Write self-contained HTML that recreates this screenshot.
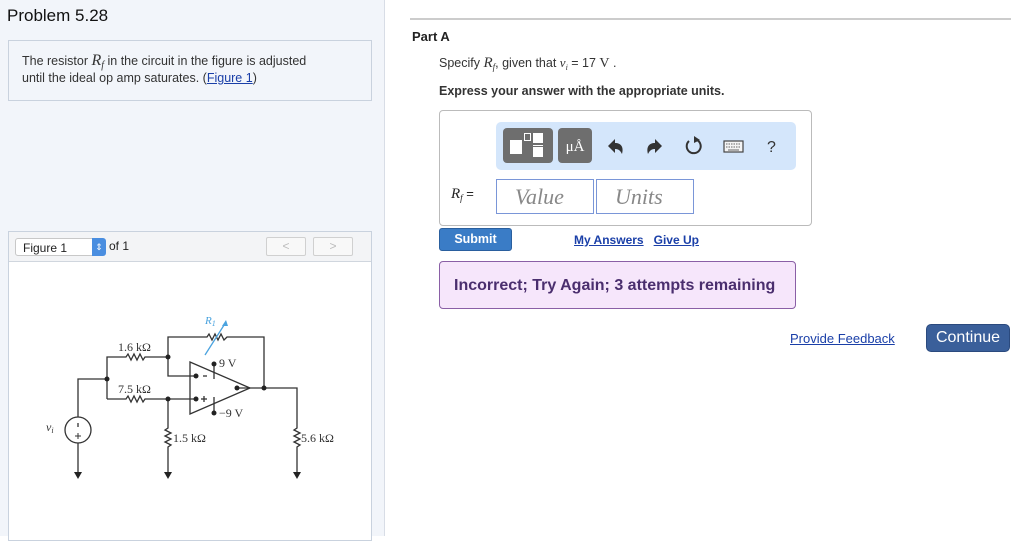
<!DOCTYPE html>
<html><head><meta charset="utf-8"><style>
*{margin:0;padding:0;box-sizing:border-box}
body{width:1024px;height:536px;overflow:hidden;background:#fff;font-family:"Liberation Sans",sans-serif;position:relative;color:#222}
.abs{position:absolute}
#left{left:0;top:0;width:385px;height:536px;background:#f2f5fa;border-right:1px solid #d8dde6}
a{color:#1a3fa8;text-decoration:underline}
.serif{font-family:"Liberation Serif",serif;font-style:italic}
sub{line-height:0;vertical-align:-3px}
</style></head><body>
<div id="left" class="abs">
  <div class="abs" style="left:7px;top:6px;font-size:17px;color:#111">Problem 5.28</div>
  <div class="abs" style="left:8px;top:40px;width:364px;height:61px;border:1px solid #c9d2de;background:#f2f5fa;padding:12px 0 0 13px;font-size:12.5px;line-height:17px;color:#333">The resistor <span class="serif" style="font-size:16px;line-height:0">R<sub style="font-size:10px">f</sub></span> in the circuit in the figure is adjusted<br>until the ideal op amp saturates. (<a>Figure 1</a>)</div>
  <div class="abs" style="left:8px;top:231px;width:364px;height:310px;border:1px solid #c9d2de;background:#fff">
    <div style="height:30px;background:#f3f4f6;border-bottom:1px solid #d0d6de;position:relative">
      <div class="abs" style="left:6px;top:6px;width:90px;height:18px;border:1px solid #c8c8c8;border-radius:3px;background:#fff;font-size:12px;padding:2px 0 0 7px">Figure 1</div>
      <div class="abs" style="left:83px;top:6px;width:14px;height:18px;background:#4a8ee0;border-radius:0 3px 3px 0;color:#fff;font-size:9px;text-align:center;line-height:18px">⇕</div>
      <div class="abs" style="left:100px;top:7px;font-size:12px">of 1</div>
      <div class="abs" style="left:257px;top:5px;width:40px;height:19px;border:1px solid #d0d0d0;border-radius:2px;background:#f8f8f8;color:#bbb;font-size:12px;text-align:center;line-height:17px">&lt;</div>
      <div class="abs" style="left:304px;top:5px;width:40px;height:19px;border:1px solid #d0d0d0;border-radius:2px;background:#f8f8f8;color:#bbb;font-size:12px;text-align:center;line-height:17px">&gt;</div>
    </div>
  </div>
  <svg class="abs" style="left:0;top:0" width="385" height="536" viewBox="0 0 385 536">
   <g stroke="#333" stroke-width="1.3" fill="none">
    <circle cx="78" cy="430" r="13"/>
    <polyline points="78,417 78,379 107,379"/>
    <polyline points="107,399 107,357 126,357 128,354 131,360 134,354 137,360 140,354 143,360 145,357 168,357"/>
    <polyline points="107,399 126,399 128,396 131,402 134,396 137,402 140,396 143,402 145,399 196,399"/>
    <polyline points="168,357 168,337 207,337 209,334 212,340 215,334 218,340 221,334 224,340 227,337 264,337 264,388"/>
    <polyline points="168,357 168,376 196,376"/>
    <polygon points="190,362 190,414 250,388"/>
    <polyline points="236,388 297,388 297,428 294,430 300,433 294,436 300,439 294,442 300,445 297,447 297,472"/>
    <polyline points="168,399 168,428 165,430 171,433 165,436 171,439 165,442 171,445 168,447 168,472"/>
    <line x1="78" y1="443" x2="78" y2="472"/>
    <line x1="214" y1="364" x2="214" y2="379"/>
    <line x1="214" y1="397" x2="214" y2="413"/>
    <line x1="78" y1="423" x2="78" y2="427" />
    <line x1="75" y1="436" x2="81" y2="436" stroke-width="1"/><line x1="78" y1="433" x2="78" y2="439" stroke-width="1"/>
    <line x1="203" y1="376" x2="207" y2="376"/>
    <line x1="201" y1="399" x2="207" y2="399"/><line x1="204" y1="396" x2="204" y2="402"/>
    <line x1="205" y1="355" x2="226" y2="322" stroke="#4aa3df"/>
   </g>
   <polygon points="226,320 222,326 228,326" fill="#4aa3df"/>
   <g fill="#222">
    <circle cx="107" cy="379" r="2.5"/><circle cx="168" cy="357" r="2.5"/><circle cx="168" cy="399" r="2.5"/>
    <circle cx="264" cy="388" r="2.5"/><circle cx="196" cy="376" r="2.5"/><circle cx="196" cy="399" r="2.5"/>
    <circle cx="214" cy="364" r="2.5"/><circle cx="214" cy="413" r="2.5"/><circle cx="237" cy="388" r="2.5"/>
    <polygon points="74,472 82,472 78,479"/><polygon points="164,472 172,472 168,479"/><polygon points="293,472 301,472 297,479"/>
   </g>
   <g font-family="Liberation Serif,serif" font-size="12" fill="#333">
    <text x="118" y="351">1.6 kΩ</text><text x="118" y="393">7.5 kΩ</text>
    <text x="219" y="367">9 V</text><text x="219" y="417">−9 V</text>
    <text x="173" y="442">1.5 kΩ</text><text x="301" y="442">5.6 kΩ</text>
    <text x="205" y="324" fill="#4aa3df" font-style="italic" font-size="11">R<tspan font-size="8" dy="2">1</tspan></text>
    <text x="46" y="431" font-style="italic">v<tspan font-size="8" dy="2">i</tspan></text>
   </g>
  </svg>
</div>
<div class="abs" style="left:410px;top:18px;width:601px;height:2px;background:#ccc"></div>
<div class="abs" style="left:412px;top:29px;font-size:13px;font-weight:bold">Part A</div>
<div class="abs" style="left:439px;top:55px;font-size:12.5px;color:#333">Specify <span class="serif" style="font-size:15px">R<sub style="font-size:9px">f</sub></span>, given that <span class="serif" style="font-size:13px">v<sub style="font-size:8px">i</sub></span> = 17 <span style="font-family:'Liberation Serif',serif;font-size:14px">V</span> .</div>
<div class="abs" style="left:439px;top:84px;font-size:12.5px;font-weight:bold;color:#333">Express your answer with the appropriate units.</div>
<div class="abs" style="left:439px;top:110px;width:373px;height:116px;border:1px solid #bbb;border-radius:4px;background:#fff"></div>
<div class="abs" style="left:496px;top:122px;width:300px;height:48px;background:#d4e6fb;border-radius:5px"></div>
<div class="abs" style="left:503px;top:128px;width:50px;height:35px;background:#6e6e6e;border-radius:4px">
  <div class="abs" style="left:7px;top:12px;width:12px;height:14px;background:#fff"></div>
  <div class="abs" style="left:21px;top:5px;width:7px;height:8px;border:1px solid #fff"></div>
  <div class="abs" style="left:30px;top:5px;width:10px;height:10px;background:#fff"></div>
  <div class="abs" style="left:30px;top:17px;width:10px;height:1px;background:#fff"></div>
  <div class="abs" style="left:30px;top:19px;width:10px;height:10px;background:#fff"></div>
</div>
<div class="abs" style="left:558px;top:128px;width:34px;height:35px;background:#6e6e6e;border-radius:4px;color:#fff;font-family:'Liberation Serif',serif;font-size:15px;text-align:center;line-height:38px">μÅ</div>
<svg class="abs" style="left:600px;top:130px" width="190" height="32" viewBox="600 130 190 32">
  <g fill="#333">
    <path d="M608,146 L615,139 L615,143 C621,143 624,147 622,154 C620,150 618,149 615,149 L615,153 Z"/>
    <path d="M662,146 L655,139 L655,143 C649,143 646,147 648,154 C650,150 652,149 655,149 L655,153 Z"/>
  </g>
  <path d="M697,140 A7,7 0 1 1 689,141" fill="none" stroke="#333" stroke-width="2"/>
  <polygon points="694,136 700,140 694,143" fill="#333"/>
  <rect x="724" y="141" width="19" height="11" fill="#f4f4f4" stroke="#444" stroke-width="1.2"/>
  <g stroke="#666" stroke-width="1"><line x1="726" y1="144" x2="741" y2="144" stroke-dasharray="1.5 1"/><line x1="726" y1="147" x2="741" y2="147" stroke-dasharray="1.5 1"/><line x1="728" y1="150" x2="739" y2="150"/></g>
  <text x="767" y="152" font-family="Liberation Sans,sans-serif" font-size="16" fill="#333">?</text>
</svg>
<div class="abs" style="left:451px;top:186px;font-size:13px"><span class="serif" style="font-size:15px">R<sub style="font-size:9px">f</sub></span> =</div>
<div class="abs" style="left:496px;top:179px;width:98px;height:35px;border:1px solid #7a96d8;font-family:'Liberation Serif',serif;font-style:italic;font-size:22px;color:#888;padding:4px 0 0 18px">Value</div>
<div class="abs" style="left:596px;top:179px;width:98px;height:35px;border:1px solid #7a96d8;font-family:'Liberation Serif',serif;font-style:italic;font-size:22px;color:#888;padding:4px 0 0 18px">Units</div>
<div class="abs" style="left:439px;top:228px;width:73px;height:23px;background:#3a7cc6;border:1px solid #2a5f9e;border-radius:3px;color:#fff;font-weight:bold;font-size:12.5px;text-align:center;line-height:21px">Submit</div>
<div class="abs" style="left:574px;top:233px;font-size:12px;font-weight:bold"><a>My Answers</a>&nbsp;&nbsp;&nbsp;<a>Give Up</a></div>
<div class="abs" style="left:439px;top:261px;width:357px;height:48px;background:#f6e6fb;border:1px solid #8a5fa6;border-radius:4px;color:#4a2e6e;font-weight:bold;font-size:16px;padding:15px 0 0 14px">Incorrect; Try Again; 3 attempts remaining</div>
<div class="abs" style="left:790px;top:331px;font-size:13px"><a>Provide Feedback</a></div>
<div class="abs" style="left:926px;top:324px;width:84px;height:28px;background:#3a5f9a;border:1px solid #2b4a7e;border-radius:5px;color:#fff;font-size:16px;text-align:center;line-height:26px">Continue</div>
</body></html>
